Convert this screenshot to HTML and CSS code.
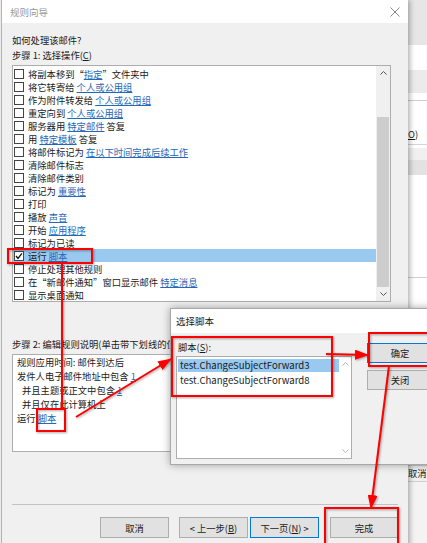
FILE: index.html
```html
<!DOCTYPE html>
<html lang="zh-CN">
<head>
    <meta charset="UTF-8">
    <meta name="viewport" content="width=device-width, initial-scale=1.0">
    <title>规则向导</title>
    <link rel="stylesheet" href="styles.css">
</head>
<body>
<div class="desktop">

    <!-- rules window behind the wizard, only its right edge shows -->
    <div class="back-window">
        <div class="bw-top"></div>
        <div class="bw-white"></div>
        <div class="bw-band"></div>
        <div class="bw-gap"></div>
        <div class="bw-label"><u>O</u>)</div>
        <div class="bw-white bw-thin"></div>
        <div class="bw-head1"></div>
        <div class="bw-head2"></div>
        <div class="bw-blank"></div>
        <div class="bw-blank2"></div>
        <div class="bw-btn">取消</div>
        <div class="bw-foot"></div>
    </div>

    <div class="window wizard">
        <div class="titlebar">
            <span class="title">规则向导</span>
            <svg class="close" width="10" height="10" viewBox="0 0 10 10"><path d="M0.5 0.5 L9.5 9.5 M9.5 0.5 L0.5 9.5" stroke="#8a8a8a" stroke-width="1" fill="none"/></svg>
        </div>
        <div class="wizard__body">
            <div class="label">如何处理该邮件?</div>
            <div class="label">步骤 1: 选择操作(<u>C</u>)</div>

            <div class="listbox actions">
                <ul class="actions__rows">
                    <li><span class="cb"></span><span>将副本移到“<a>指定</a>”文件夹中</span></li>
                    <li><span class="cb"></span><span>将它转寄给 <a>个人或公用组</a></span></li>
                    <li><span class="cb"></span><span>作为附件转发给 <a>个人或公用组</a></span></li>
                    <li><span class="cb"></span><span>重定向到 <a>个人或公用组</a></span></li>
                    <li><span class="cb"></span><span>服务器用 <a>特定邮件</a> 答复</span></li>
                    <li><span class="cb"></span><span>用 <a>特定模板</a> 答复</span></li>
                    <li><span class="cb"></span><span>将邮件标记为 <a>在以下时间完成后续工作</a></span></li>
                    <li><span class="cb"></span><span>清除邮件标志</span></li>
                    <li><span class="cb"></span><span>清除邮件类别</span></li>
                    <li><span class="cb"></span><span>标记为 <a>重要性</a></span></li>
                    <li><span class="cb"></span><span>打印</span></li>
                    <li><span class="cb"></span><span>播放 <a>声音</a></span></li>
                    <li><span class="cb"></span><span>开始 <a>应用程序</a></span></li>
                    <li><span class="cb"></span><span>标记为已读</span></li>
                    <li class="is-selected"><span class="cb"><svg width="8" height="8" viewBox="0 0 8 8"><path d="M1 4 L3 6.4 L7 1.3" stroke="#111" stroke-width="1.3" fill="none"/></svg></span><span>运行 <a>脚本</a></span></li>
                    <li><span class="cb"></span><span>停止处理其他规则</span></li>
                    <li><span class="cb"></span><span>在“新邮件通知”窗口显示邮件 <a>特定消息</a></span></li>
                    <li><span class="cb"></span><span>显示桌面通知</span></li>
                </ul>
                <div class="vscroll">
                    <div class="vscroll__arrow"><svg width="7" height="4" viewBox="0 0 7 4"><path d="M0.5 3.5 L3.5 0.5 L6.5 3.5" stroke="#555" fill="none"/></svg></div>
                    <div class="vscroll__track"><div class="vscroll__thumb"></div></div>
                    <div class="vscroll__arrow"><svg width="7" height="4" viewBox="0 0 7 4"><path d="M0.5 0.5 L3.5 3.5 L6.5 0.5" stroke="#555" fill="none"/></svg></div>
                </div>
            </div>

            <div class="label step2">步骤 2: 编辑规则说明(单击带下划线的值进行编辑)(<u>D</u>):</div>
            <div class="desc">
                <div>规则应用时间: 邮件到达后</div>
                <div>发件人电子邮件地址中包含 <a>1</a></div>
                <div class="desc__and">并且主题或正文中包含 <a>1</a></div>
                <div class="desc__and">并且仅在此计算机上</div>
                <div>运行 <a>脚本</a></div>
            </div>

            <div class="sep"></div>
            <div class="buttons">
                <button class="btn btn--cancel">取消</button>
                <button class="btn btn--back">&lt; 上一步(<u>B</u>)</button>
                <button class="btn btn--default">下一页(<u>N</u>) &gt;</button>
                <button class="btn btn--finish">完成</button>
            </div>
        </div>
    </div>

    <div class="window picker">
        <div class="titlebar picker__titlebar">
            <span class="title">选择脚本</span>
        </div>
        <div class="picker__body">
            <div class="picker__main">
                <div class="label picker__label">脚本(<u>S</u>):</div>
                <div class="listbox scripts">
                    <ul class="scripts__rows">
                        <li class="is-selected">test.ChangeSubjectForward3</li>
                        <li>test.ChangeSubjectForward8</li>
                    </ul>
                    <div class="vscroll vscroll--off">
                        <div class="vscroll__arrow"><svg width="7" height="4" viewBox="0 0 7 4"><path d="M0.5 3.5 L3.5 0.5 L6.5 3.5" stroke="#b5b5b5" fill="none"/></svg></div>
                        <div class="vscroll__track"></div>
                        <div class="vscroll__arrow"><svg width="7" height="4" viewBox="0 0 7 4"><path d="M0.5 0.5 L3.5 3.5 L6.5 0.5" stroke="#b5b5b5" fill="none"/></svg></div>
                    </div>
                </div>
            </div>
            <div class="picker__side">
                <button class="btn btn--default btn--side">确定</button>
                <button class="btn btn--side">关闭</button>
            </div>
        </div>
    </div>

    <!-- red markup drawn over the screenshot -->
    <svg class="marks" width="427" height="543" viewBox="0 0 427 543">
        <defs>
            <marker id="bighead" markerWidth="14" markerHeight="10" refX="13" refY="5" orient="auto" markerUnits="userSpaceOnUse">
                <path d="M0 0 L14 5 L0 10 Z" fill="#f00"/>
            </marker>
        </defs>
        <g fill="none" stroke="#f00" stroke-width="2">
            <rect x="8" y="249" width="84" height="14"/>
            <line x1="62" y1="263" x2="62" y2="409"/>
            <rect x="37" y="409" width="28" height="22"/>
            <line x1="76" y1="417" x2="171" y2="359" marker-end="url(#bighead)"/>
            <rect x="172" y="337" width="160" height="59"/>
            <line x1="326" y1="354" x2="368" y2="355" marker-end="url(#bighead)"/>
            <rect x="369" y="333" width="62" height="33"/>
            <line x1="389" y1="366" x2="371" y2="508" marker-end="url(#bighead)"/>
            <rect x="325" y="508" width="73" height="40"/>
        </g>
    </svg>
</div>
</body>
</html>
```

FILE: styles.css
```css
* {
    box-sizing: border-box;
}
body {
    margin: 0;
    background: #f0f0f0;
    font-family: "Noto Sans CJK SC", "Noto Sans", sans-serif;
    font-size: 9.3px;
    color: #1a1a1a;
}
ul {
    margin: 0;
    padding: 0;
    list-style: none;
}
a {
    color: #2468b8;
    text-decoration: underline;
}
u {
    text-decoration: underline;
}
.desktop {
    position: relative;
    width: 427px;
    height: 543px;
    overflow: hidden;
    background: #f0f0f0;
}

/* window behind */
.back-window {
    position: absolute;
    left: 400px;
    top: 0;
    width: 40px;
    height: 543px;
    display: flex;
    flex-direction: column;
    background: #fff;
}
.bw-top { height: 45px; background: #e6e6e6; }
.bw-white { height: 25px; background: #fff; }
.bw-band { height: 23px; background: #ebebeb; }
.bw-gap { height: 8px; border-bottom: 1px solid #cfcfcf; }
.bw-label {
    height: 44px;
    padding: 26px 0 0 8px;
    line-height: 14px;
    border-bottom: 1px solid #d4d4d4;
}
.bw-thin { height: 3px; }
.bw-head1 { height: 12px; background: #f0f0f0; }
.bw-head2 { height: 15px; background: #e2e2e2; }
.bw-blank { height: 103px; border-bottom: 1px solid #d0d0d0; }
.bw-blank2 { height: 187px; }
.bw-btn {
    height: 17px;
    padding-left: 8px;
    line-height: 15px;
    background: #f0f0f0;
    border-top: 1px solid #cfcfcf;
    border-bottom: 1px solid #cfcfcf;
}
.bw-foot { flex: 1; background: #f3f3f3; }

/* windows */
.window {
    position: absolute;
    background: #f0f0f0;
}
.titlebar {
    height: 23px;
    background: #fff;
    display: flex;
    align-items: center;
    justify-content: space-between;
    padding: 0 8px 0 8px;
}
.title {
    color: #999;
    font-size: 9.5px;
}
.label {
    line-height: 15px;
}

.wizard {
    left: 2px;
    top: 0;
    width: 406px;
    height: 560px;
    box-shadow: -1px 0 0 #b4b4b4, 2px 0 5px rgba(0, 0, 0, 0.3);
}
.wizard__body {
    padding: 10px 17px 0 10px;
}

.listbox {
    display: flex;
    background: #fff;
    border: 1px solid #adadad;
}
.actions {
    margin-top: 2px;
    height: 237px;
}
.actions__rows {
    flex: 1;
    padding-top: 1px;
}
.actions__rows li {
    height: 13px;
    display: flex;
    align-items: center;
    padding-left: 1px;
    white-space: nowrap;
}
.actions__rows li.is-selected {
    background: #99c9ef;
}
.cb {
    width: 10px;
    height: 10px;
    border: 1px solid #444;
    background: #fff;
    margin-right: 4px;
    display: flex;
    align-items: center;
    justify-content: center;
    flex-shrink: 0;
}

.vscroll {
    width: 14px;
    background: #f0f0f0;
    display: flex;
    flex-direction: column;
}
.vscroll__arrow {
    height: 14px;
    display: flex;
    align-items: center;
    justify-content: center;
}
.vscroll__track {
    flex: 1;
    padding: 37px 1px 0 1px;
}
.vscroll__thumb {
    height: 170px;
    background: #cdcdcd;
}
.vscroll--off {
    width: 12px;
    background: #fff;
}

.step2 {
    margin-top: 35px;
    width: 158px;
    overflow: hidden;
    white-space: nowrap;
}
.desc {
    margin-top: 2px;
    height: 98px;
    background: #fff;
    border: 1px solid #adadad;
    padding: 0 4px;
    line-height: 14px;
}
.desc__and {
    padding-left: 5px;
}

.sep {
    margin: 52px -7px 0 0;
    border-top: 1px solid #c3c3c3;
}
.buttons {
    margin: 12px -7px 0 0;
    display: flex;
    justify-content: flex-end;
}
.btn {
    width: 69px;
    height: 21px;
    padding: 0;
    background: #e1e1e1;
    border: 1px solid #adadad;
    font-family: inherit;
    font-size: 9.3px;
    color: #1a1a1a;
}
.btn--back { margin-left: 10px; }
.btn--default {
    margin-left: 2px;
    border-color: #0078d7;
}
.btn--finish {
    width: 68px;
    margin-left: 11px;
}

/* script picker */
.picker {
    left: 170px;
    top: 308px;
    width: 280px;
    height: 157px;
    border: 1px solid #a8a8a8;
    box-shadow: 0 0 8px rgba(0, 0, 0, 0.35);
}
.picker__titlebar {
    height: 24px;
    padding-left: 5px;
}
.picker__titlebar .title {
    color: #1a1a1a;
}
.picker__body {
    display: flex;
    padding: 0 0 0 5px;
}
.picker__main {
    padding-top: 7px;
}
.picker__label {
    padding-left: 2px;
    line-height: 14px;
}
.scripts {
    margin-top: 2px;
    width: 176px;
    height: 103px;
}
.scripts__rows {
    flex: 1;
    padding: 2px 0 0 1px;
}
.scripts__rows li {
    height: 13px;
    line-height: 13px;
    margin-bottom: 2px;
    padding-left: 2px;
    font-size: 9.6px;
}
.scripts__rows li.is-selected {
    background: #99c9ef;
}
.picker__side {
    margin-left: 15px;
    padding-top: 10px;
    display: flex;
    flex-direction: column;
    gap: 7px;
}
.btn--side {
    width: 66px;
    height: 20px;
    margin-left: 0;
}

.marks {
    position: absolute;
    left: 0;
    top: 0;
    pointer-events: none;
    filter: drop-shadow(1px 1px 1px rgba(0, 0, 0, 0.35));
}
```
